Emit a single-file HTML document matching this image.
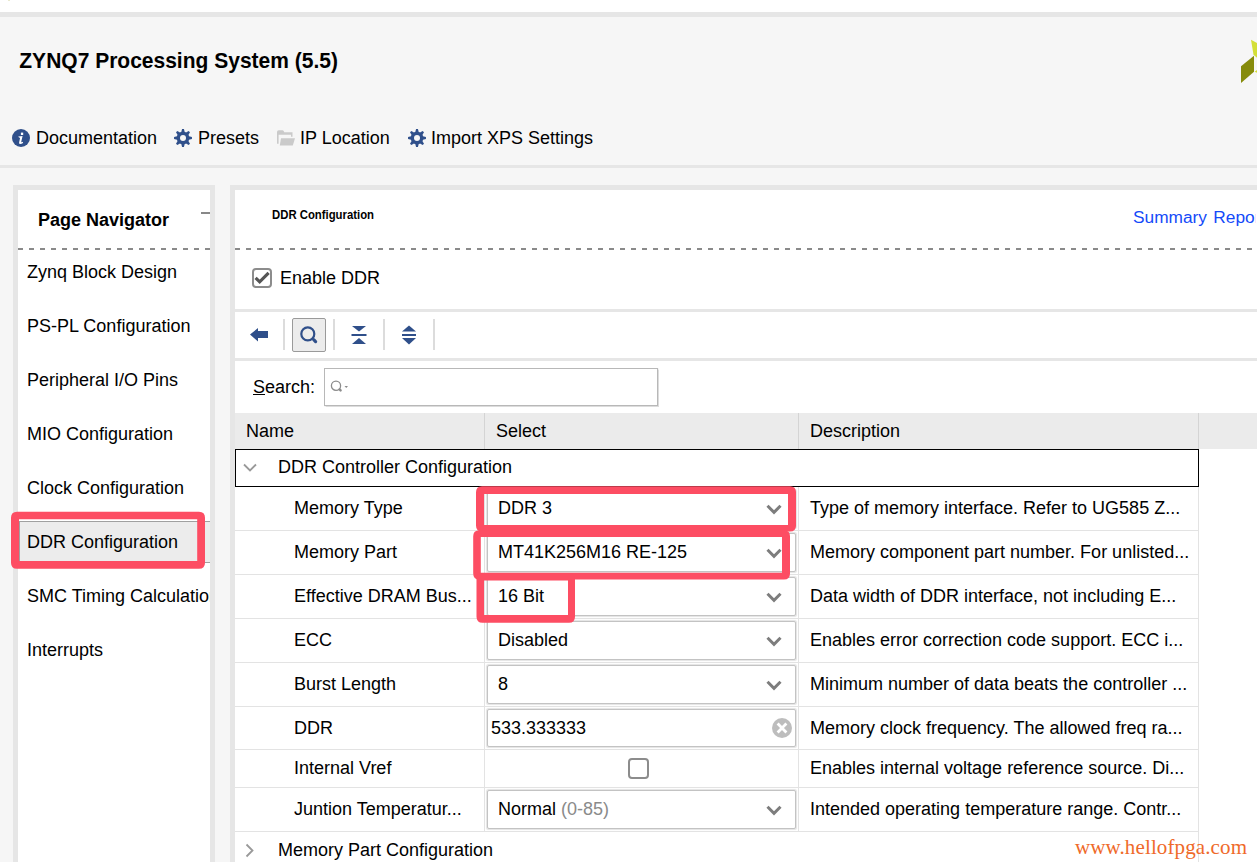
<!DOCTYPE html>
<html><head><meta charset="utf-8">
<style>
*{margin:0;padding:0;box-sizing:border-box}
html,body{width:1257px;height:862px;overflow:hidden;background:#f6f6f6;font-family:"Liberation Sans",sans-serif;color:#000}
.a{position:absolute}
.t{position:absolute;white-space:nowrap;font-size:18px;line-height:20px}
.sep{position:absolute;background:#e6e6e6}
.rs{position:absolute;left:235px;width:964px;height:1px;background:#e3e3e3}
.cb{position:absolute;left:487px;width:309px;border:1px solid #c3c3c3;border-radius:2px;background:#fff;box-shadow:0 0 1px 0.5px #e4e4e4}
.chev{position:absolute;left:766px;width:16px;height:11px}
.red{position:absolute;border:8px solid #fd5064;border-radius:9px}
</style></head><body>
<!-- top white strip -->
<div class="a" style="left:0;top:0;width:1257px;height:12px;background:#fff"></div><div class="a" style="left:8px;top:0;width:2px;height:1px;background:#e9e9cf;z-index:2"></div>
<div class="sep" style="left:0;top:12px;width:1257px;height:5px"></div>
<div class="sep" style="left:0;top:165px;width:1257px;height:3px"></div>

<!-- logo partial -->
<svg class="a" style="left:1230px;top:30px" width="27" height="60" viewBox="1230 30 27 60">
<polygon points="1251,39.7 1257,43 1257,57.8 1253.5,54.7" fill="#d4df37"/>
<polygon points="1241,66.2 1254,55.7 1254,71.8 1241,82.9" fill="#868b0b"/>
<polygon points="1254.6,71.8 1257,70 1257,72.8" fill="#d4df37"/>
</svg>

<div class="t" style="left:19.3px;top:48px;font-size:21px;font-weight:bold;line-height:24px;transform:scale(1,1.07);transform-origin:0 0">ZYNQ7 Processing System (5.5)</div>

<!-- toolbar -->
<svg class="a" style="left:12px;top:129px" width="18" height="18" viewBox="0 0 18 18"><circle cx="9" cy="9" r="9" fill="#30508b"/><rect x="8.9" y="3.6" width="2.3" height="2.4" fill="#fff"/><path d="M6.2 7.6 L10.6 7.1 L9.3 12.6 Q9.1 13.5 10 13.2 L11 12.7 L11 14.1 Q9.6 15.1 8.2 15.1 Q6.8 15.1 7.1 13.6 L8 9.3 Q8.1 8.5 7 8.6 Z" fill="#fff"/></svg>
<div class="t" style="left:36px;top:128px">Documentation</div>
<svg class="a" style="left:174px;top:129px" width="18" height="18" viewBox="-9 -9 18 18"><polygon points="-1.71,-5.96 -0.94,-8.95 0.94,-8.95 1.71,-5.96 3.01,-5.42 5.66,-6.99 6.99,-5.66 5.42,-3.01 5.96,-1.71 8.95,-0.94 8.95,0.94 5.96,1.71 5.42,3.01 6.99,5.66 5.66,6.99 3.01,5.42 1.71,5.96 0.94,8.95 -0.94,8.95 -1.71,5.96 -3.01,5.42 -5.66,6.99 -6.99,5.66 -5.42,3.01 -5.96,1.71 -8.95,0.94 -8.95,-0.94 -5.96,-1.71 -5.42,-3.01 -6.99,-5.66 -5.66,-6.99 -3.01,-5.42" fill="#30508b"/><circle r="6.1" fill="#30508b"/><circle r="3" fill="#f6f6f6"/></svg>
<div class="t" style="left:198px;top:128px">Presets</div>
<svg class="a" style="left:277px;top:130px" width="18" height="16" viewBox="0 0 18 16"><path d="M0 2 Q0 0.3 1.7 0.3 L5.3 0.3 Q6.3 0.3 6.8 1.3 L7.3 2.2 L15.5 2.2 L15.5 6.8 L14 6.8 L14 4.7 L1.6 4.7 L1.6 13.7 L0 13.7 Z" fill="#cacaca"/><polygon points="4,8.3 18,8.3 15.8,15.5 2.8,15.5" fill="#cacaca"/></svg>
<div class="t" style="left:300px;top:128px">IP Location</div>
<svg class="a" style="left:408px;top:129px" width="18" height="18" viewBox="-9 -9 18 18"><polygon points="-1.71,-5.96 -0.94,-8.95 0.94,-8.95 1.71,-5.96 3.01,-5.42 5.66,-6.99 6.99,-5.66 5.42,-3.01 5.96,-1.71 8.95,-0.94 8.95,0.94 5.96,1.71 5.42,3.01 6.99,5.66 5.66,6.99 3.01,5.42 1.71,5.96 0.94,8.95 -0.94,8.95 -1.71,5.96 -3.01,5.42 -5.66,6.99 -6.99,5.66 -5.42,3.01 -5.96,1.71 -8.95,0.94 -8.95,-0.94 -5.96,-1.71 -5.42,-3.01 -6.99,-5.66 -5.66,-6.99 -3.01,-5.42" fill="#30508b"/><circle r="6.1" fill="#30508b"/><circle r="3" fill="#f6f6f6"/></svg>
<div class="t" style="left:431px;top:128px">Import XPS Settings</div>

<!-- NAV PANEL -->
<div class="a" style="left:13px;top:185px;width:202px;height:700px;border:5px solid #e6e6e6;background:#fff"></div>
<div class="t" style="left:38px;top:210px;font-weight:bold">Page Navigator</div>
<div class="a" style="left:201px;top:212px;width:9px;height:2px;background:#888"></div>
<div class="a" style="left:18px;top:248px;width:192px;height:2px;background:repeating-linear-gradient(90deg,#8a8a8a 0 5px,transparent 5px 11px)"></div>
<div class="t" style="left:27px;top:262px">Zynq Block Design</div>
<div class="t" style="left:27px;top:316px">PS-PL Configuration</div>
<div class="t" style="left:27px;top:370px">Peripheral I/O Pins</div>
<div class="t" style="left:27px;top:424px">MIO Configuration</div>
<div class="t" style="left:27px;top:478px">Clock Configuration</div>
<div class="a" style="left:19px;top:521px;width:191px;height:42px;background:#ececec;border-top:1px solid #a0a0a0;border-left:1px solid #a0a0a0;border-bottom:1px solid #a0a0a0"></div>
<div class="t" style="left:27px;top:532px">DDR Configuration</div>
<svg class="a" style="left:0;top:500px" width="220" height="80" viewBox="0 500 220 80"><path d="M17 511.7 H199 Q205 511.7 205 517.7 V562.7 Q205 568.7 199 568.7 H17 Q11 568.7 11 562.7 V517.7 Q11 511.7 17 511.7 Z M19 519.3 H197.2 V561 H19 Z" fill="#fd4d63" fill-rule="evenodd"/></svg>
<div class="a" style="left:18px;top:570px;width:192px;height:40px;overflow:hidden"><div class="t" style="left:9px;top:16px">SMC Timing Calculation</div></div>
<div class="t" style="left:27px;top:640px">Interrupts</div>

<!-- RIGHT PANEL -->
<div class="a" style="left:230px;top:185px;width:1100px;height:700px;border:5px solid #e6e6e6;background:#fff"></div>
<div class="t" style="left:272px;top:208px;font-size:12px;font-weight:bold;line-height:14px;transform:scaleX(0.945);transform-origin:0 0">DDR Configuration</div>
<div class="a" style="left:1120px;top:200px;width:136px;height:30px;overflow:hidden"><div class="t" style="left:13px;top:7px;font-size:17.3px;word-spacing:1.6px;color:#144af9">Summary Report</div></div>
<div class="a" style="left:235px;top:248px;width:1022px;height:2px;background:repeating-linear-gradient(90deg,#8a8a8a 0 5px,transparent 5px 11px)"></div>

<div class="a" style="left:251.7px;top:267.6px;width:20.6px;height:20.6px;border:2px solid #8c8c8c;border-radius:4px"></div>
<svg class="a" style="left:252px;top:268px" width="21" height="21" viewBox="0 0 21 21"><path d="M3.6 9.8 L7.7 13.8 L16.6 4.9" stroke="#555" stroke-width="3.2" fill="none"/></svg>
<div class="t" style="left:280px;top:268px">Enable DDR</div>

<div class="sep" style="left:235px;top:309px;width:1022px;height:3px"></div>
<!-- toolbar 2 -->
<svg class="a" style="left:250px;top:328px" width="19" height="14" viewBox="0 0 19 14"><polygon points="0,6.5 8,0 8,3 18,3 18,10 8,10 8,13.5" fill="#2f4f8a"/></svg>
<div class="a" style="left:283px;top:319px;width:2px;height:31px;background:#dcdcdc"></div>
<div class="a" style="left:292px;top:318px;width:34px;height:34px;background:#ececec;border:1px solid #9a9a9a;border-radius:2px"></div>
<svg class="a" style="left:292px;top:318px" width="34" height="34" viewBox="0 0 34 34"><circle cx="15.8" cy="15.9" r="6.5" stroke="#2f4f8a" stroke-width="2.2" fill="none"/><line x1="21.7" y1="21.7" x2="23.6" y2="23.6" stroke="#2f4f8a" stroke-width="3.2" stroke-linecap="round"/></svg>
<div class="a" style="left:333px;top:319px;width:2px;height:31px;background:#dcdcdc"></div>
<svg class="a" style="left:351px;top:325px" width="16" height="20" viewBox="0 0 16 20"><polygon points="1,1 15,1 8,6.5" fill="#2f4f8a"/><rect x="0.5" y="9" width="15" height="2" fill="#2f4f8a"/><polygon points="8,13 15,19 1,19" fill="#2f4f8a"/></svg>
<div class="a" style="left:383px;top:319px;width:2px;height:31px;background:#dcdcdc"></div>
<svg class="a" style="left:401px;top:325px" width="16" height="20" viewBox="0 0 16 20"><polygon points="8,0.5 15,6.5 1,6.5" fill="#2f4f8a"/><rect x="1" y="9" width="14" height="2" fill="#2f4f8a"/><polygon points="1,13 15,13 8,19.5" fill="#2f4f8a"/></svg>
<div class="a" style="left:433px;top:319px;width:2px;height:31px;background:#dcdcdc"></div>
<div class="sep" style="left:235px;top:358px;width:1022px;height:3px"></div>

<!-- search -->
<div class="t" style="left:253px;top:377px">Search:</div>
<div class="a" style="left:253px;top:394px;width:12px;height:1px;background:#000"></div>
<div class="a" style="left:324px;top:368px;width:334px;height:38px;border:1px solid #b8b8b8;box-shadow:0 0 1px 0.5px #dcdcdc;background:#fff"></div>
<svg class="a" style="left:329px;top:379px" width="20" height="16" viewBox="0 0 20 16"><circle cx="7" cy="6.8" r="4.6" stroke="#8c8c8c" stroke-width="1.3" fill="none"/><line x1="10.6" y1="10.4" x2="11.6" y2="11.4" stroke="#8c8c8c" stroke-width="2.4" stroke-linecap="round"/><polygon points="15.5,7 19,7 17.25,9" fill="#8c8c8c"/></svg>

<!-- table header -->
<div class="a" style="left:235px;top:413px;width:1022px;height:36px;background:#ebebeb"></div>
<div class="a" style="left:484px;top:413px;width:1px;height:36px;background:#d4d4d4"></div>
<div class="a" style="left:798px;top:413px;width:1px;height:36px;background:#d4d4d4"></div>
<div class="a" style="left:1198px;top:413px;width:1px;height:36px;background:#d4d4d4"></div>
<div class="t" style="left:246px;top:421px">Name</div>
<div class="t" style="left:496px;top:421px">Select</div>
<div class="t" style="left:810px;top:421px">Description</div>

<!-- group row -->
<div class="a" style="left:235px;top:449px;width:964px;height:38px;border:1px solid #000;background:#fff"></div>
<svg class="a" style="left:243px;top:463px" width="15" height="10" viewBox="0 0 15 10"><path d="M1 1.5 L7 7.5 L13 1.5" stroke="#999" stroke-width="1.8" fill="none"/></svg>
<div class="t" style="left:278px;top:457px">DDR Controller Configuration</div>

<!-- column dividers -->
<div class="a" style="left:484px;top:487px;width:1px;height:345px;background:#e3e3e3"></div>
<div class="a" style="left:798px;top:487px;width:1px;height:345px;background:#e3e3e3"></div>
<div class="a" style="left:1198px;top:487px;width:1px;height:375px;background:#e3e3e3"></div>
<!-- row separators -->
<div class="rs" style="top:530px"></div>
<div class="rs" style="top:574px"></div>
<div class="rs" style="top:618px"></div>
<div class="rs" style="top:662px"></div>
<div class="rs" style="top:706px"></div>
<div class="rs" style="top:749px"></div>
<div class="rs" style="top:787px"></div>
<div class="rs" style="top:831px"></div>

<!-- combos -->
<div class="cb" style="top:490px;height:38px"></div>
<div class="cb" style="top:533px;height:39px"></div>
<div class="cb" style="top:577px;height:39px"></div>
<div class="cb" style="top:621px;height:39px"></div>
<div class="cb" style="top:665px;height:39px"></div>
<div class="cb" style="top:709px;height:38px"></div>
<div class="cb" style="top:790px;height:39px"></div>

<svg class="chev" style="top:504px" viewBox="0 0 16 11"><path d="M1.5 1.8 L8 8.3 L14.5 1.8" stroke="#7d7d7d" stroke-width="3" fill="none"/></svg>
<svg class="chev" style="top:548px" viewBox="0 0 16 11"><path d="M1.5 1.8 L8 8.3 L14.5 1.8" stroke="#7d7d7d" stroke-width="3" fill="none"/></svg>
<svg class="chev" style="top:592px" viewBox="0 0 16 11"><path d="M1.5 1.8 L8 8.3 L14.5 1.8" stroke="#7d7d7d" stroke-width="3" fill="none"/></svg>
<svg class="chev" style="top:636px" viewBox="0 0 16 11"><path d="M1.5 1.8 L8 8.3 L14.5 1.8" stroke="#7d7d7d" stroke-width="3" fill="none"/></svg>
<svg class="chev" style="top:680px" viewBox="0 0 16 11"><path d="M1.5 1.8 L8 8.3 L14.5 1.8" stroke="#7d7d7d" stroke-width="3" fill="none"/></svg>
<svg class="chev" style="top:805px" viewBox="0 0 16 11"><path d="M1.5 1.8 L8 8.3 L14.5 1.8" stroke="#7d7d7d" stroke-width="3" fill="none"/></svg>
<svg class="a" style="left:772px;top:718px" width="20" height="20" viewBox="0 0 20 20"><circle cx="10" cy="10" r="10" fill="#bdbdbd"/><path d="M5.6 5.6 L14.4 14.4 M14.4 5.6 L5.6 14.4" stroke="#fff" stroke-width="2.8"/></svg>
<div class="a" style="left:628px;top:758px;width:21px;height:21px;border:2px solid #8c8c8c;border-radius:4px;background:#fff"></div>

<!-- row texts -->
<div class="t" style="left:294px;top:498px">Memory Type</div>
<div class="t" style="left:294px;top:542px">Memory Part</div>
<div class="t" style="left:294px;top:586px">Effective DRAM Bus...</div>
<div class="t" style="left:294px;top:630px">ECC</div>
<div class="t" style="left:294px;top:674px">Burst Length</div>
<div class="t" style="left:294px;top:718px">DDR</div>
<div class="t" style="left:294px;top:758px">Internal Vref</div>
<div class="t" style="left:294px;top:799px">Juntion Temperatur...</div>

<div class="t" style="left:498px;top:498px">DDR 3</div>
<div class="t" style="left:498px;top:542px">MT41K256M16 RE-125</div>
<div class="t" style="left:498px;top:586px">16 Bit</div>
<div class="t" style="left:498px;top:630px">Disabled</div>
<div class="t" style="left:498px;top:674px">8</div>
<div class="t" style="left:491px;top:718px">533.333333</div>
<div class="t" style="left:498px;top:799px">Normal <span style="color:#8a8a8a">(0-85)</span></div>

<div class="t" style="left:810px;top:498px">Type of memory interface. Refer to UG585 Z...</div>
<div class="t" style="left:810px;top:542px">Memory component part number. For unlisted...</div>
<div class="t" style="left:810px;top:586px">Data width of DDR interface, not including E...</div>
<div class="t" style="left:810px;top:630px">Enables error correction code support. ECC i...</div>
<div class="t" style="left:810px;top:674px">Minimum number of data beats the controller ...</div>
<div class="t" style="left:810px;top:718px">Memory clock frequency. The allowed freq ra...</div>
<div class="t" style="left:810px;top:758px">Enables internal voltage reference source. Di...</div>
<div class="t" style="left:810px;top:799px">Intended operating temperature range. Contr...</div>

<svg class="a" style="left:245px;top:843px" width="10" height="15" viewBox="0 0 10 15"><path d="M1.5 1.5 L7.5 7.5 L1.5 13.5" stroke="#999" stroke-width="1.8" fill="none"/></svg>
<div class="t" style="left:278px;top:840px">Memory Part Configuration</div>

<!-- red highlight boxes -->
<svg class="a" style="left:0;top:0" width="1257" height="862" viewBox="0 0 1257 862"><path d="M482 486.3 H790 Q796 486.3 796 492.3 V525.5 Q796 531.5 790 531.5 H482 Q476 531.5 476 525.5 V492.3 Q476 486.3 482 486.3 Z M484 494 H788 V525 H484 Z" fill="#fd4d63" fill-rule="evenodd"/><path d="M479.2 530.2 H784 Q790 530.2 790 536.2 V573.6 Q790 579.6 784 579.6 H479.2 Q473.2 579.6 473.2 573.6 V536.2 Q473.2 530.2 479.2 530.2 Z M480.8 537 H782 V572.7 H480.8 Z" fill="#fd4d63" fill-rule="evenodd"/><path d="M482.5 573 H569 Q575 573 575 579 V616.8 Q575 622.8 569 622.8 H482.5 Q476.5 622.8 476.5 616.8 V579 Q476.5 573 482.5 573 Z M484 580.6 H568 V615.1 H484 Z" fill="#fd4d63" fill-rule="evenodd"/></svg>

<div class="t" style="left:1075px;top:834.7px;font-family:'Liberation Serif',serif;font-size:21px;letter-spacing:0.12px;line-height:24px;color:#ef6a2a">www.hellofpga.com</div>
</body></html>
